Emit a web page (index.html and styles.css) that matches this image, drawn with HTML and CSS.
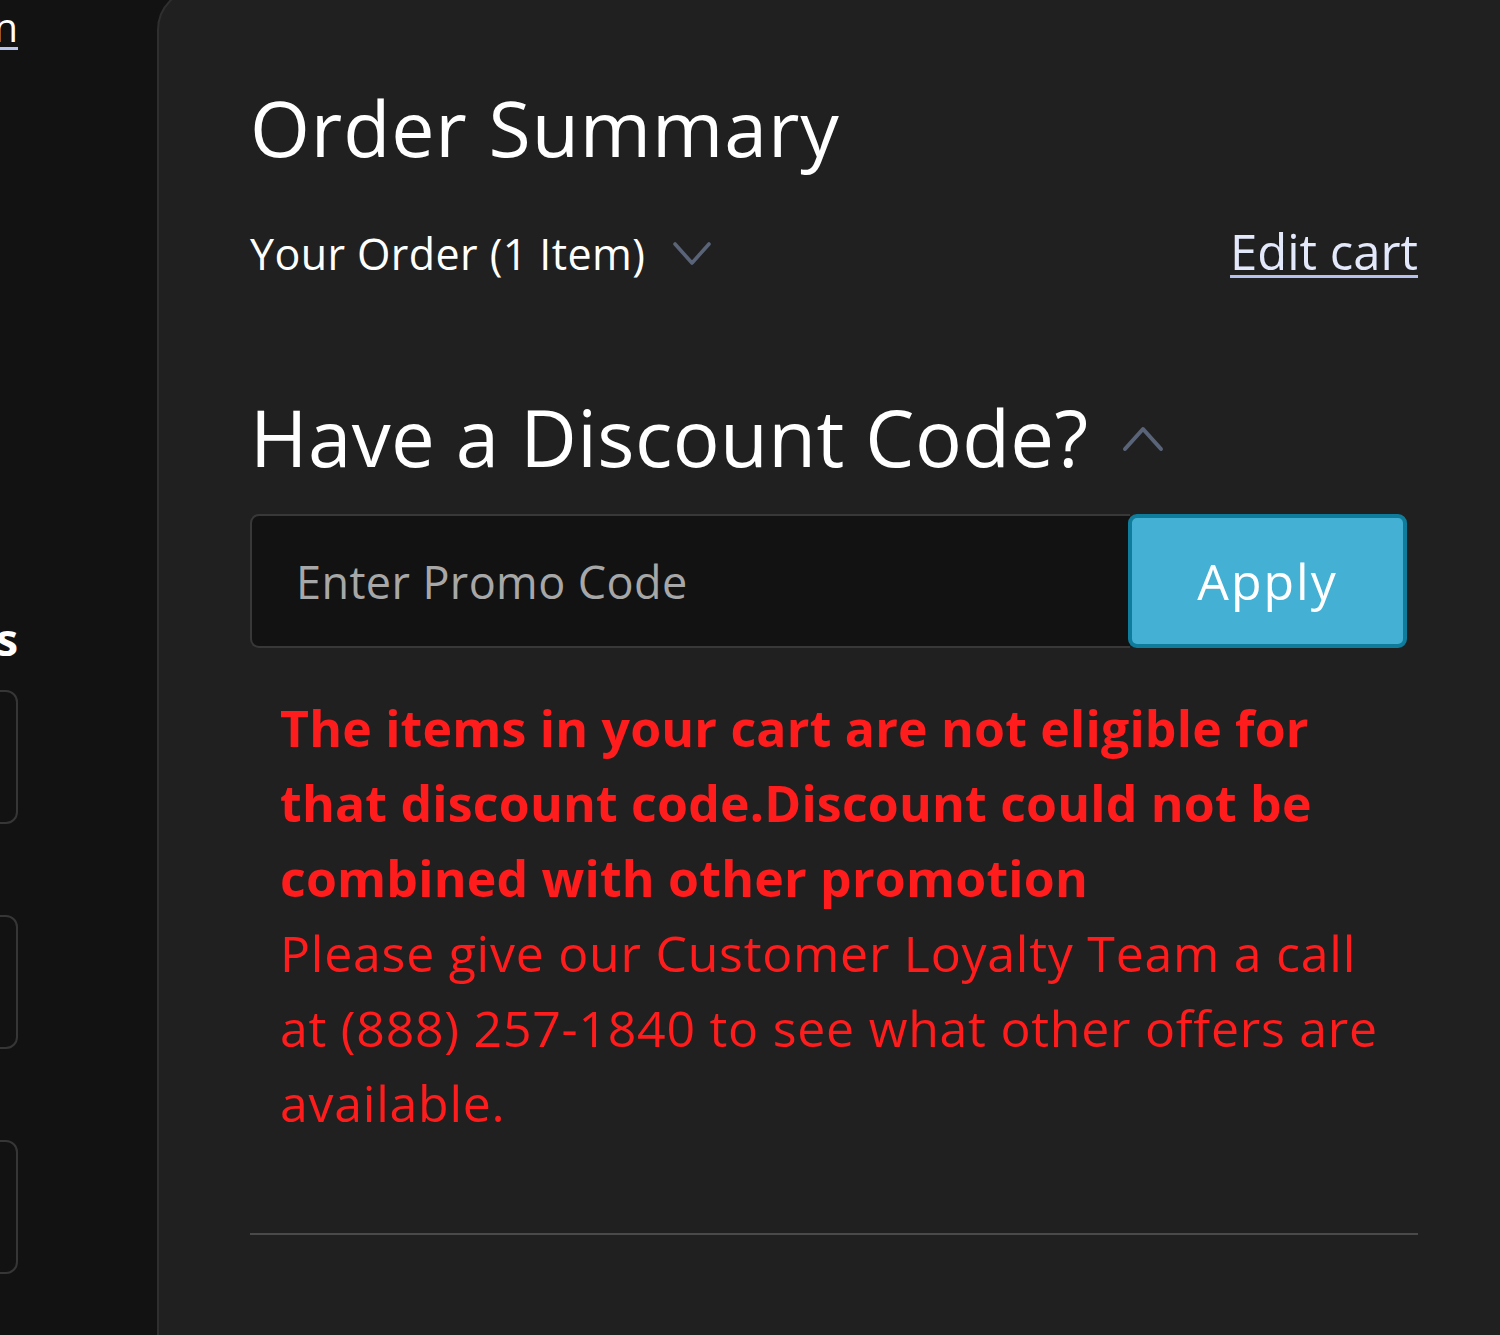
FILE: index.html
```html
<!DOCTYPE html>
<html lang="en">
<head>
<meta charset="utf-8">
<title>Order Summary</title>
<link rel="stylesheet" href="styles.css">
</head>
<body>
<div class="page">
  <aside class="left">
    <div class="left-inner">
      <a class="signin" href="#">n</a>
      <div class="left-label">s</div>
      <div class="left-box"></div>
      <div class="left-box"></div>
      <div class="left-box"></div>
    </div>
  </aside>
  <main class="card">
    <div class="card-inner">
      <h1 class="title">Order Summary</h1>
      <div class="order-row">
        <div class="order-toggle">
          <span class="order-label">Your Order (1 Item)</span>
          <svg class="chev-down" width="40" height="26" viewBox="0 0 40 26"><path d="M3 3 L20 22 L37 3" fill="none" stroke="#5a6478" stroke-width="3.6" stroke-linecap="round" stroke-linejoin="round"/></svg>
        </div>
        <a class="edit-cart" href="#">Edit cart</a>
      </div>
      <div class="discount-head">
        <h2 class="discount-title">Have a Discount Code?</h2>
        <svg class="chev-up" width="44" height="30" viewBox="0 0 44 30"><path d="M4 26 L22 6 L40 26" fill="none" stroke="#5a6478" stroke-width="4" stroke-linecap="round" stroke-linejoin="round"/></svg>
      </div>
      <div class="promo">
        <input class="promo-input" type="text" placeholder="Enter Promo Code">
        <button class="promo-btn" type="button">Apply</button>
      </div>
      <div class="promo-msg">
        <p class="msg-bold">The items in your cart are not eligible for<br>that discount code.Discount could not be<br>combined with other promotion</p>
        <p class="msg-normal">Please give our Customer Loyalty Team a call<br>at (888) 257-1840 to see what other offers are<br>available.</p>
      </div>
      <div class="divider"></div>
    </div>
  </main>
</div>
</body>
</html>
```

FILE: styles.css
```css
html, body {
  margin: 0;
  padding: 0;
  background: #121212;
  height: 1335px;
  overflow: hidden;
}

.page {
  display: flex;
  align-items: flex-start;
  font-family: "Open Sans", "Liberation Sans", sans-serif;
  color: #ffffff;
}

.left {
  flex: 0 0 157px;
  width: 157px;
  overflow: hidden;
}

.left-inner {
  width: 48px;
  margin-left: -30px;
  text-align: right;
  padding-top: 2px;
}

.signin {
  display: block;
  font-size: 40px;
  line-height: 50px;
  color: #ffffff;
  text-decoration: underline;
  text-decoration-color: #b8c4ea;
  text-decoration-thickness: 3px;
  text-underline-offset: 5px;
}

.left-label {
  margin-top: 562px;
  font-size: 45px;
  line-height: 50px;
  font-weight: 700;
  color: #ffffff;
}

.left-box {
  height: 134px;
  border: 2px solid #363636;
  border-radius: 12px;
  box-sizing: border-box;
  margin-top: 91px;
}

.left-label + .left-box {
  margin-top: 26px;
}

.card {
  flex: 0 0 1360px;
  margin-top: -12px;
  height: 1400px;
  background: #202020;
  border: 2px solid #2f2f2f;
  border-radius: 42px 0 0 0;
  padding: 99px 0 0 91px;
  box-sizing: border-box;
}

.card-inner {
  width: 1168px;
}

.title {
  margin: 0;
  font-size: 77px;
  line-height: 77px;
  font-weight: 500;
  letter-spacing: 0.9px;
}

.order-row {
  margin-top: 55px;
  height: 60px;
  display: flex;
  align-items: baseline;
  justify-content: space-between;
}

.order-toggle {
  display: flex;
  align-items: center;
  gap: 27px;
}

.order-label {
  font-size: 43px;
  line-height: 60px;
  font-weight: 500;
  letter-spacing: 0.4px;
}

.edit-cart {
  font-size: 49px;
  line-height: 60px;
  font-weight: 400;
  color: #e3e8fb;
  text-decoration: underline;
  text-decoration-color: #b6c2ec;
  text-decoration-thickness: 3px;
  text-underline-offset: 5px;
}

.discount-head {
  margin-top: 117px;
  display: flex;
  align-items: center;
  gap: 32px;
}

.discount-title {
  margin: 0;
  font-size: 78px;
  line-height: 78px;
  font-weight: 500;
  letter-spacing: 0.4px;
}

.chev-up {
  margin-top: 2px;
}

.promo {
  margin-top: 38px;
  width: 1157px;
  height: 134px;
  display: flex;
}

.promo-input {
  flex: 1;
  min-width: 0;
  height: 134px;
  box-sizing: border-box;
  background: #121212;
  border: 2px solid #383838;
  border-right: none;
  border-radius: 9px 0 0 9px;
  padding: 0 0 0 44px;
  font-family: "Open Sans", "Liberation Sans", sans-serif;
  font-size: 45px;
  font-weight: 500;
  letter-spacing: 0.4px;
  color: #ffffff;
  outline: none;
}

.promo-input::placeholder {
  color: #a7a7a7;
  opacity: 1;
}

.promo-btn {
  flex: 0 0 279px;
  height: 134px;
  box-sizing: border-box;
  background: #43b0d4;
  border: 4px solid #0f7c9b;
  border-radius: 9px;
  color: #ffffff;
  font-family: "Open Sans", "Liberation Sans", sans-serif;
  font-size: 50px;
  font-weight: 500;
  letter-spacing: 2px;
  padding: 0;
  margin-left: -2px;
}

.promo-msg {
  margin-top: 43px;
  padding-left: 30px;
  color: #ff1c1c;
  font-size: 50px;
  line-height: 75px;
}

.promo-msg p {
  margin: 0;
}

.msg-bold {
  font-weight: 700;
  letter-spacing: 0.2px;
}

.msg-normal {
  font-weight: 500;
  letter-spacing: 0.75px;
}

.divider {
  margin-top: 92px;
  height: 2px;
  background: #4a4a4a;
}
```
